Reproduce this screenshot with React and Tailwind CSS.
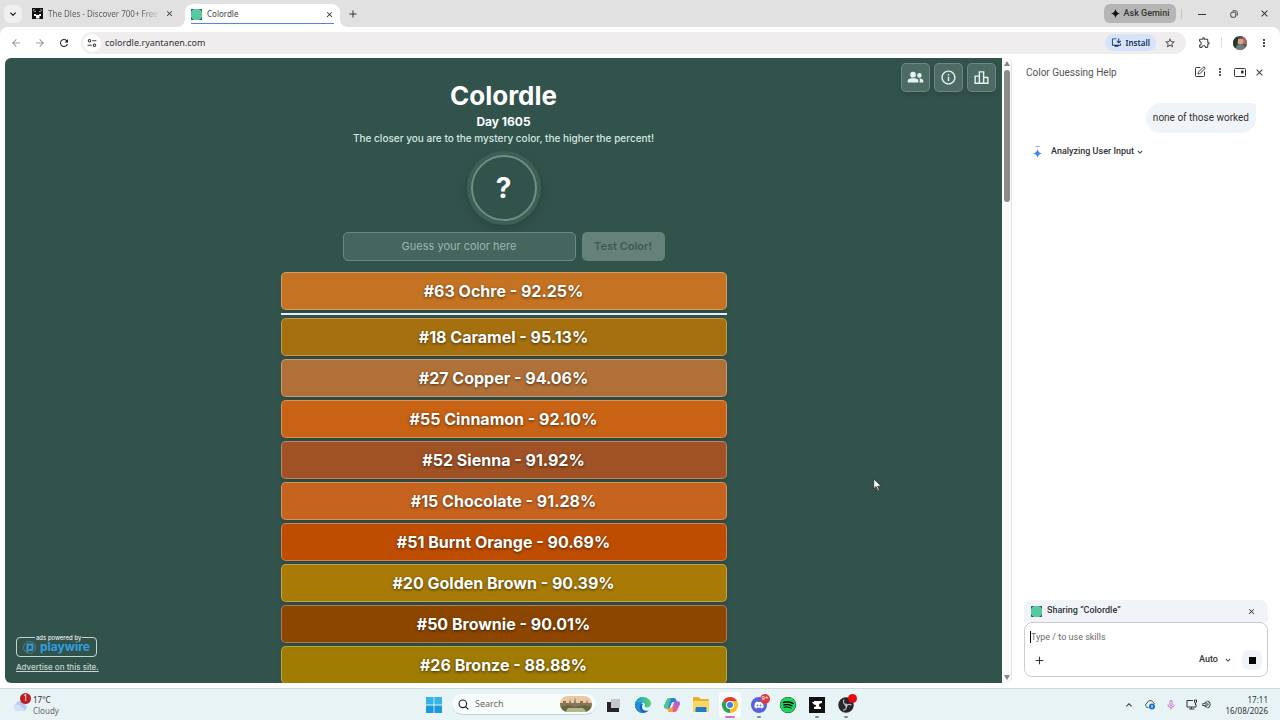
import React from 'react';
import {
  MdArrowBack,
  MdArrowForward,
  MdRefresh,
  MdClose,
  MdAdd,
  MdExpandMore,
  MdExpandLess,
  MdStarBorder,
  MdOutlineExtension,
  MdMoreVert,
  MdInfoOutline,
  MdOutlineLeaderboard,
  MdOutlineInstallDesktop,
  MdMicNone,
  MdOutlineVolumeUp,
} from 'react-icons/md';
import { FaDiscord, FaSpotify } from 'react-icons/fa';
import { LuSquarePen } from 'react-icons/lu';

const latestGuess = { id: 63, name: 'Ochre', percent: '92.25', color: 'bg-[#c47322]' };

const guesses = [
  { id: 18, name: 'Caramel', percent: '95.13', color: 'bg-[#a6700e]' },
  { id: 27, name: 'Copper', percent: '94.06', color: 'bg-[#b07038]' },
  { id: 55, name: 'Cinnamon', percent: '92.10', color: 'bg-[#c86214]' },
  { id: 52, name: 'Sienna', percent: '91.92', color: 'bg-[#a05224]' },
  { id: 15, name: 'Chocolate', percent: '91.28', color: 'bg-[#c6641f]' },
  { id: 51, name: 'Burnt Orange', percent: '90.69', color: 'bg-[#be4d02]' },
  { id: 20, name: 'Golden Brown', percent: '90.39', color: 'bg-[#a97b06]' },
  { id: 50, name: 'Brownie', percent: '90.01', color: 'bg-[#8d4600]' },
  { id: 26, name: 'Bronze', percent: '88.88', color: 'bg-[#a07b02]' },
];

/* Site icon: green tile with dark corners */
const ColordleIcon = () => (
  <svg viewBox="0 0 22 22" className="size-[11px] shrink-0">
    <rect width="22" height="22" rx="2" fill="#26352f" />
    <path d="M6 0h10l4 2 2 4v10l-2 4-4 2H6l-4-2-2-4V6l2-4z" fill="#55c9a1" />
  </svg>
);

const DlesIcon = () => (
  <svg viewBox="0 0 22 22" className="size-[11px] shrink-0">
    <rect width="22" height="22" fill="#111" />
    <path d="M1 5l3-3 2 1-3 3zM21 5l-3-3-2 1 3 3zM4 6h4v2H4zM14 6h4v2h-4z" fill="#999" />
    <path d="M4 12h3l2 2h4l2-2h3v4h-3v5H8v-5H4z" fill="#fff" />
  </svg>
);

const SparkIcon = ({ className }) => (
  <svg viewBox="0 0 16 16" className={className} fill="currentColor">
    <path d="M8 0c1 4.500 3.500 7 8 8-4.500 1-7 3.500-8 8-1-4.500-3.500-7-8-8 4.500-1 7-3.500 8-8z" />
  </svg>
);

const TuneIcon = () => (
  <svg viewBox="0 0 16 16" className="size-[10px]" fill="none" stroke="#3c3c3c" strokeWidth="1.700">
    <circle cx="4" cy="4.500" r="2" />
    <path d="M8.500 4.500H15M1 11.500h6.500" />
    <circle cx="12" cy="11.500" r="2" />
  </svg>
);

const TabFoot = ({ className }) => (
  <svg viewBox="0 0 8 8" className={className} fill="#fff">
    <path d="M8 0v8H0a8 8 0 0 0 8-8z" />
  </svg>
);

const TabStrip = () => (
  <div className="flex h-[27px] shrink-0 items-center bg-[#e1e1e1] pl-1">
    <button aria-label="Search tabs" className="flex size-[18px] items-center justify-center rounded-md bg-[#f0f0f0]">
      <MdExpandMore className="size-3" />
    </button>
    <div className="ml-[10px] flex w-[142px] items-center gap-[5px]">
      <DlesIcon />
      <span className="flex-1 bg-linear-to-r from-[#5a5a5a] from-85% to-transparent bg-clip-text text-[8px] whitespace-nowrap text-transparent">
        The Dles - Discover 700+ Free
      </span>
      <button aria-label="Close tab">
        <MdClose className="size-[9px] text-[#333]" />
      </button>
    </div>
    <div className="relative ml-[11px] flex h-[23px] w-[155px] items-center gap-[5px] self-end rounded-t-lg bg-white px-[6px] pb-[3px]">
      <TabFoot className="absolute -left-2 bottom-0 size-2" />
      <ColordleIcon />
      <span className="flex-1 text-[8px] text-[#444]">Colordle</span>
      <button aria-label="Close tab">
        <MdClose className="size-[9px] text-[#222]" />
      </button>
      <div className="absolute inset-x-[6px] bottom-[3px] h-px bg-[#4f86e0]"></div>
      <TabFoot className="absolute -right-2 bottom-0 size-2 -scale-x-100" />
    </div>
    <button aria-label="New tab" className="ml-[7px]">
      <MdAdd className="size-3 text-[#333]" />
    </button>

    {/* Window controls */}
    <div className="ml-auto flex items-center text-[#333]">
      <button className="flex h-[19px] w-[72px] items-center justify-center gap-1 rounded-md bg-[#b5b5b5] font-['Roboto',sans-serif] text-[9px] font-medium">
        <SparkIcon className="size-[9px] text-[#111]" />
        Ask Gemini
      </button>
      <div className="ml-[5px] h-[10px] w-px bg-[#c4c4c4]"></div>
      <button aria-label="Minimize" className="w-[36px] pl-4">
        <svg viewBox="0 0 8 8" className="size-2" stroke="currentColor">
          <path d="M0 4.500h8" />
        </svg>
      </button>
      <button aria-label="Restore" className="w-[31px]">
        <svg viewBox="0 0 16 16" className="mx-auto size-2" fill="none" stroke="currentColor" strokeWidth="1.800">
          <rect x="1.500" y="4.500" width="10" height="10" rx="2.500" />
          <path d="M5 1.500h6a3.500 3.500 0 0 1 3.500 3.500v6" />
        </svg>
      </button>
      <button aria-label="Close window" className="w-[31px]">
        <MdClose className="mx-auto size-[11px]" />
      </button>
    </div>
  </div>
);

const Toolbar = () => (
  <div className="shrink-0 bg-[#e1e1e1]">
    <div className="flex h-[31px] items-center rounded-t-lg bg-white px-[10px] text-[#444]">
      <div className="flex w-[71px] items-center gap-3">
        <button aria-label="Back"><MdArrowBack className="size-3 text-[#999]" /></button>
        <button aria-label="Forward"><MdArrowForward className="size-3 text-[#999]" /></button>
        <button aria-label="Reload"><MdRefresh className="size-3 text-[#222]" /></button>
      </div>
      <div className="flex h-[22px] flex-1 items-center rounded-full bg-[#efedee] pr-[10px] pl-[2px]">
        <button aria-label="Site information" className="flex size-[18px] items-center justify-center rounded-full bg-white">
          <TuneIcon />
        </button>
        <input
          aria-label="Address"
          defaultValue="colordle.ryantanen.com"
          className="ml-1 min-w-0 flex-1 bg-transparent text-[9px] text-[#333] outline-none"
        />
        <button className="flex h-[17px] items-center gap-1 rounded-full bg-[#d6e4fb] px-[6px] text-[8px] font-semibold text-[#14305c]">
          <MdOutlineInstallDesktop className="size-[11px]" />
          Install
        </button>
        <button aria-label="Bookmark" className="ml-2"><MdStarBorder className="size-3" /></button>
      </div>
      <button aria-label="Extensions" className="ml-3"><MdOutlineExtension className="size-[13px]" /></button>
      <div className="ml-[10px] h-[11px] w-px bg-[#ddd]"></div>
      <button aria-label="Profile" className="ml-[11px]">
        <svg viewBox="0 0 14 14" className="size-[14px] rounded-full">
          <rect width="14" height="14" fill="#3d4a3c" />
          <path d="M9 0h5v9l-4-1z" fill="#b2635c" />
          <circle cx="7.500" cy="5.500" r="3" fill="#d9a590" />
          <path d="M3 14c0-4 2-6 5-6s4 2 4 6z" fill="#6d7f7c" />
          <path d="M0 3l4-3 1 5-3 7H0z" fill="#26362b" />
        </svg>
      </button>
      <button aria-label="Menu" className="ml-[11px]"><MdMoreVert className="size-3 text-[#222]" /></button>
    </div>
  </div>
);

const Guess = ({ guess }) => (
  <li
    className={`flex h-[38px] shrink-0 items-center justify-center rounded-[5px] border border-white/30 text-[16px] font-bold text-white shadow-md text-shadow-[0_1px_3px_rgb(0_0_0/0.6)] ${guess.color}`}
  >
    #{guess.id} {guess.name} - {guess.percent}%
  </li>
);

const iconButton =
  'flex size-[29px] items-center justify-center rounded-[5px] border border-white/20 bg-[#4c6b64] text-[#e6f2ee] shadow-md';

const GamePage = () => (
  <main className="relative flex min-w-0 flex-1 flex-col items-center overflow-hidden rounded-l-md bg-[#32534c] pt-[21px] font-['Inter',sans-serif] text-white">
    <h1 className="text-[26px] leading-[34px] font-bold">Colordle</h1>
    <h2 className="text-[12px] leading-[18px] font-bold">Day 1605</h2>
    <p className="text-[10px] leading-[14px] font-medium text-[#d5e6e0]">
      The closer you are to the mystery color, the higher the percent!
    </p>
    <div className="mt-[10px] flex size-[66px] shrink-0 items-center justify-center rounded-full border-2 border-[#6d9085] text-[28px] font-bold shadow-[0_0_0_4px_#3d5f57,0_4px_14px_4px_rgb(0_0_0/0.18)]">
      ?
    </div>
    <form className="mt-[11px] flex h-[29px] shrink-0 gap-[6px]" onSubmit={(e) => e.preventDefault()}>
      <input
        aria-label="Guess your color here"
        placeholder="Guess your color here"
        className="w-[233px] rounded-[5px] border border-[#6b8a82] bg-[#45655f] text-center text-[11px] outline-none placeholder:text-[#9db5ae]"
      />
      <button className="w-[83px] rounded-[5px] bg-[#64827a] text-[11px] font-semibold text-[#3d5a53]">Test Color!</button>
    </form>

    {/* Guesses, best ones below the line */}
    <ul className="mt-[11px] w-[446px]">
      <Guess guess={latestGuess} />
    </ul>
    <hr className="my-[3px] w-[446px] border-t-2 border-[#e6f0f2]" />
    <ul className="flex w-[446px] flex-col gap-[3px]">
      {guesses.map((guess) => (
        <Guess key={guess.id} guess={guess} />
      ))}
    </ul>

    <div className="absolute top-[5px] right-[6px] flex gap-1">
      <button aria-label="Friends" className={iconButton}>
        <svg viewBox="0 0 24 24" className="size-[17px]" fill="currentColor">
          <circle cx="8.500" cy="8" r="4" />
          <path d="M1 19v-2.500C1 13.500 5 13 8.500 13s7.500.5 7.500 3.500V19z" />
          <circle cx="17.500" cy="9" r="3.200" />
          <path d="M17.500 19H23v-2.300c0-2.400-3-3.200-6-3.200 1.200.9 1.500 2 .5 5.500z" />
        </svg>
      </button>
      <button aria-label="How to play" className={iconButton}><MdInfoOutline className="size-[17px]" /></button>
      <button aria-label="Statistics" className={iconButton}><MdOutlineLeaderboard className="size-[17px]" /></button>
    </div>

    {/* Ad network badge */}
    <div className="absolute bottom-[10px] left-[11px] w-[81px]">
      <div className="relative flex h-5 items-center justify-center gap-1 rounded-sm border border-[#c4d5cf] text-[#2f9fe0]">
        <span className="absolute -top-1 left-[18px] bg-[#32534c] px-px text-[6px] leading-[7px] whitespace-nowrap text-white">ads powered by</span>
        <svg viewBox="0 0 26 26" className="size-[13px]" fill="none">
          <circle cx="13" cy="13" r="12" stroke="#5c7b77" strokeWidth="2" />
          <path d="M9 22V7h8a2 2 0 0 1 2 2v7a2 2 0 0 1-2 2h-5" stroke="currentColor" strokeWidth="4" />
        </svg>
        <span className="text-[12px] leading-3 font-bold">playwire</span>
      </div>
      <a href="#advertise" className="mt-1 block text-[8px] leading-3 font-medium whitespace-nowrap text-[#c4d5cf] underline">
        Advertise on this site.
      </a>
    </div>
  </main>
);

const Scrollbar = () => (
  <div className="flex w-[10px] shrink-0 flex-col items-center rounded-r-md border-r border-[#e3e3e3] bg-[#fafafa] py-[3px]">
    <svg viewBox="0 0 6 5" className="h-[5px] w-[6px]" fill="#858585"><path d="M3 0l3 5H0z" /></svg>
    <div className="mt-1 h-[132px] w-[6px] rounded-full bg-[#8b8b8b]"></div>
    <svg viewBox="0 0 6 5" className="mt-auto h-[5px] w-[6px]" fill="#858585"><path d="M3 5l3-5H0z" /></svg>
  </div>
);

const GeminiPanel = () => (
  <aside className="flex w-[268px] shrink-0 flex-col bg-white px-3 font-['Roboto',sans-serif] text-[#333]">
    <header className="flex h-[28px] shrink-0 items-center pr-[3px] pl-[2px]">
      <h2 className="flex-1 text-[10px] text-[#555]">Color Guessing Help</h2>
      <div className="flex items-center gap-2">
        <button aria-label="New chat"><LuSquarePen className="size-3" /></button>
        <button aria-label="More"><MdMoreVert className="size-3" /></button>
        <button aria-label="Dock panel">
          <svg viewBox="0 0 24 18" className="h-[9px] w-3" fill="none" stroke="currentColor" strokeWidth="2">
            <rect x="1" y="1" width="22" height="16" rx="2" />
            <rect x="15" y="6" width="3" height="4" fill="currentColor" />
          </svg>
        </button>
        <button aria-label="Close panel"><MdClose className="size-[11px]" /></button>
      </div>
    </header>
    <p className="mt-[17px] mr-3 self-end rounded-[15px] rounded-tr-sm bg-[#f0f4f8] px-[7px] text-[10px] leading-[30px]">
      none of those worked
    </p>
    <button className="mt-3 ml-[9px] flex h-[14px] items-center self-start text-[9px] font-medium">
      <svg viewBox="0 0 18 24" className="h-3 w-[9px]" fill="#4285f4">
        <path d="M9 6c1 5.500 3.500 8 9 9-5.500 1-8 3.500-9 9-1-5.500-3.500-8-9-9 5.500-1 8-3.500 9-9z" />
        <path d="M5 0h8v2H5z" opacity=".7" />
      </svg>
      <span className="ml-[9px]">Analyzing User Input</span>
      <MdExpandMore className="ml-px size-[10px]" />
    </button>

    <div className="mt-auto mb-[6px]">
      <div className="flex h-[22px] items-center gap-[5px] rounded-t-lg bg-[#f0f4f8] pr-3 pl-[7px] text-[9px] font-medium">
        <ColordleIcon />
        <span className="flex-1">Sharing “Colordle”</span>
        <button aria-label="Stop sharing"><MdClose className="size-[9px]" /></button>
      </div>
      <div className="flex h-[55px] flex-col justify-between rounded-lg border border-[#ccc] bg-white pt-2 pr-[5px] pb-[6px] pl-[5px]">
        <div className="flex items-center">
          <div className="h-3 w-px bg-black"></div>
          <input aria-label="Message" placeholder="Type / to use skills" className="min-w-0 flex-1 text-[9px] leading-3 outline-none placeholder:text-[#6b6b6b]" />
        </div>
        <div className="flex items-center">
          <button aria-label="Add"><MdAdd className="ml-[3px] size-[13px]" /></button>
          <select aria-label="Model" className="ml-auto appearance-none text-[9px] font-medium">
            <option>Auto</option>
          </select>
          <MdExpandMore className="ml-[5px] size-[10px]" />
          <button aria-label="Stop" className="ml-[9px] flex size-5 items-center justify-center rounded-md bg-[#f0f4f8]">
            <span className="size-[7px] bg-black"></span>
          </button>
        </div>
      </div>
    </div>
  </aside>
);

const TaskApp = ({ label, running, active, children }) => (
  <button
    aria-label={label}
    className={`relative flex h-[26px] w-[22px] items-center justify-center rounded-sm ${active ? 'bg-white/80' : ''}`}
  >
    {children}
    {running && <span className="absolute bottom-0 h-[2px] w-1 rounded-full bg-[#888]"></span>}
    {active && <span className="absolute bottom-0 h-[2px] w-[10px] rounded-full bg-[#d070c8]"></span>}
  </button>
);

const Taskbar = () => (
  <footer className="grid h-8 shrink-0 grid-cols-[1fr_auto_1fr] items-center border-t border-[#cbdcdd] bg-[#e8f3f5] text-[#333]">
    <button className="flex items-center gap-1 pl-3 text-left text-[8px]">
      <span className="relative">
        <svg viewBox="0 0 32 24" className="h-3 w-4">
          <path d="M8 23a7 7 0 0 1 0-13 9 9 0 0 1 17 0 7 7 0 0 1 0 13z" fill="#b7c9ef" />
          <path d="M6 23a6 6 0 0 1 1-11c6-3 11 1 12 5 6 0 7 6 3 6z" fill="#d5e0f8" />
        </svg>
        <span className="absolute -top-[6px] left-2 flex size-[11px] items-center justify-center rounded-full bg-[#bd1e24] text-[8px] text-white">1</span>
      </span>
      <span className="pl-px leading-[11px]">
        17°C
        <span className="block text-[#666]">Cloudy</span>
      </span>
    </button>

    {/* Pinned apps */}
    <div className="flex items-center gap-[7px]">
      <TaskApp label="Start">
        <svg viewBox="0 0 16 16" className="size-4" fill="#1c9bdc">
          <path d="M0 0h7.600v7.600H0zM8.400 0H16v7.600H8.400z" fill="#35b4e6" />
          <path d="M0 8.400h7.600V16H0zM8.400 8.400H16V16H8.400z" />
        </svg>
      </TaskApp>
      <label className="flex h-[21px] w-[144px] items-center gap-[6px] rounded-full border-b border-[#c5d3d5] bg-[#f9fcfd] pr-1 pl-[6px]">
        <svg viewBox="0 0 16 16" className="size-[11px]" fill="none" stroke="#222" strokeWidth="1.700">
          <circle cx="7" cy="7" r="5.500" />
          <path d="M11 11l4 4" />
        </svg>
        <input aria-label="Search" placeholder="Search" className="min-w-0 flex-1 text-[9px] outline-none placeholder:text-[#666]" />
        <svg viewBox="0 0 32 16" className="h-4 w-8">
          <clipPath id="skyline"><rect width="32" height="16" rx="8" /></clipPath>
          <g clipPath="url(#skyline)">
            <rect width="32" height="16" fill="#e8c9a4" />
            <path d="M0 7h3V5h3v2h3l1-4 1 4h3l1-6 1 6h4V5h3v2h3l1-3 1 3h4v5H0z" fill="#8c7358" />
            <path d="M0 11l8-2 7 2 9-2 8 2v5H0z" fill="#5c6b3d" />
            <path d="M8 12h15l4 4H5z" fill="#b7b58c" />
          </g>
        </svg>
      </label>
      <TaskApp label="Task view">
        <svg viewBox="0 0 14 14" className="size-[14px]">
          <path d="M4 1h9v9H4z" fill="#c4c8ca" />
          <path d="M0 4h4v6h8v4H0z" fill="#252525" />
        </svg>
      </TaskApp>
      <TaskApp label="Edge">
        <svg viewBox="0 0 32 32" className="size-4">
          <defs>
            <linearGradient id="edgeTop" x1="0" x2="1"><stop stopColor="#1c9ce0" /><stop offset="1" stopColor="#5ad26c" /></linearGradient>
          </defs>
          <path d="M16 0a16 16 0 1 0 12 26.500c-3 1.500-8 1.500-11-.5-4-3-4-8-1-11L2 8z" fill="#1466b8" />
          <path d="M0 15C1 6 8 0 16 0c9 0 16 6 16 13 0 5-4 8-8 8-4 0-5.500-1.500-4.500-3.500C21 14 17 10 12 10 6 10 2 12 0 15z" fill="url(#edgeTop)" />
          <path d="M0 16c2-4 6-6 11-6 3 0 5 1 6 2-6 1-9 7-7 12 1 4 4 7 8 8A16 16 0 0 1 0 16z" fill="#1f8fdd" />
        </svg>
      </TaskApp>
      <TaskApp label="Copilot">
        <svg viewBox="0 0 32 32" className="size-4">
          <path d="M11 2h9c3 0 4 2 5 5l1 3h-7c-3 0-4 2-5 5l-3 8H4c-4 0-4-4-3-7l4-9c1-3 3-5 6-5z" fill="#2683d8" />
          <path d="M5 7c1-3 3-5 6-5h3l-5 17c-1 3-2 4-4 4-5 0-5-4-4-7z" fill="#4dc58b" />
          <path d="M21 30h-9c-3 0-4-2-5-5l-1-3h7c3 0 4-2 5-5l3-8h7c4 0 4 4 3 7l-4 9c-1 3-3 5-6 5z" fill="#e95c93" />
          <path d="M12 30c-3 0-4-2-5-5l-1-3h7c2 0 3-1 4-3l1 11z" fill="#f6a340" />
          <path d="M21 9h7c4 0 4 4 3 7l-1 2-11-2z" fill="#a466df" />
        </svg>
      </TaskApp>
      <TaskApp label="File Explorer">
        <svg viewBox="0 0 32 30" className="h-[15px] w-4">
          <path d="M0 3c0-2 1-3 3-3h8l4 4h14c2 0 3 1 3 3v20c0 2-1 3-3 3H3c-2 0-3-1-3-3z" fill="#e9ae2e" />
          <path d="M0 8h32v19c0 2-1 3-3 3H3c-2 0-3-1-3-3z" fill="#fbd462" />
          <path d="M5 30v-7c0-2 1-3 3-3h16c2 0 3 1 3 3v7z" fill="#1f7ad1" />
        </svg>
      </TaskApp>
      <TaskApp label="Chrome" active>
        <svg viewBox="0 0 32 32" className="size-4">
          <path d="M16 16L2.140 8A16 16 0 0 1 29.860 8z" fill="#e33b2e" />
          <path d="M16 16L29.860 8A16 16 0 0 1 16 32z" fill="#fbc116" />
          <path d="M16 16v16A16 16 0 0 1 2.140 8z" fill="#2ba24c" />
          <path d="M16 8h13.860L23 20z" fill="#fbc116" />
          <path d="M2.140 8L9 20l7-4z" fill="#2ba24c" />
          <circle cx="16" cy="16" r="8" fill="#fff" />
          <circle cx="16" cy="16" r="6" fill="#3b7ded" />
        </svg>
      </TaskApp>
      <TaskApp label="Discord" running>
        <span className="flex size-4 items-center justify-center rounded-full bg-[#5562e0]"><FaDiscord className="size-[10px] text-white" /></span>
        <span className="absolute top-[2px] right-0 flex size-[10px] items-center justify-center rounded-full bg-[#d83c48] text-[6px] text-white">9+</span>
      </TaskApp>
      <TaskApp label="Spotify">
        <span className="rounded-full bg-black"><FaSpotify className="size-4 text-[#1fd760]" /></span>
      </TaskApp>
      <TaskApp label="Anvil" running>
        <svg viewBox="0 0 16 16" className="size-4">
          <rect width="16" height="16" fill="#111" />
          <path d="M3 5h2V4h8v2c-2 0-3 1-3 2s0 2 2 2v2H5v-2c2 0 2-1 2-2-2 0-3-1-4-3z" fill="#fff" />
        </svg>
      </TaskApp>
      <TaskApp label="OBS Studio" running>
        <svg viewBox="0 0 32 32" className="size-4" fill="none" stroke="#b9bcc0" strokeWidth="2.500">
          <circle cx="16" cy="16" r="15.500" fill="#24262a" stroke="none" />
          <path d="M12 5c-3 5 0 10 5 10M27 16c-5-3-10-1-10 4M10 26c6 0 8-5 6-10" />
          <circle cx="16" cy="16" r="3" fill="#b9bcc0" stroke="none" />
        </svg>
        <span className="absolute top-[2px] right-0 size-[9px] rounded-full bg-[#e50914]"></span>
      </TaskApp>
    </div>

    {/* System tray */}
    <div className="flex items-center justify-end pr-3">
      <button aria-label="Hidden icons"><MdExpandLess className="size-3" /></button>
      <button aria-label="OneDrive" className="ml-[9px]">
        <svg viewBox="0 0 24 20" className="h-[10px] w-3" fill="none">
          <path d="M9 15H6a5 5 0 0 1 0-9 7 7 0 0 1 13-1l2 3" stroke="#555" strokeWidth="2" />
          <circle cx="16" cy="13" r="6" fill="#1473c8" />
          <path d="M16 10v6" stroke="#fff" strokeWidth="2" />
        </svg>
      </button>
      <button aria-label="Microphone" className="ml-[9px]"><MdMicNone className="size-3 text-[#c271c4]" /></button>
      <button aria-label="Network and volume" className="ml-[9px] flex items-center gap-[3px]">
        <svg viewBox="0 0 24 22" className="h-[11px] w-3" fill="none" stroke="#333" strokeWidth="2">
          <path d="M14 3H2v13h18v-5M6 20h11M11 16v4M17 2v4a2 2 0 0 0 4 0V2zM19 8v4" />
        </svg>
        <MdOutlineVolumeUp className="size-[11px]" />
      </button>
      <time className="ml-[13px] text-right text-[8px] leading-[11px]">
        17:11
        <span className="block">16/08/2026</span>
      </time>
    </div>
  </footer>
);

const App = () => {
  return (
    <div className="relative flex h-screen flex-col overflow-hidden bg-white font-['Noto_Sans','Open_Sans',sans-serif]">
      <TabStrip />
      <Toolbar />
      <div className="flex min-h-0 flex-1 pb-[5px] pl-[5px]">
        <GamePage />
        <Scrollbar />
        <GeminiPanel />
      </div>
      <Taskbar />

      {/* Mouse pointer */}
      <svg viewBox="0 0 12 18" className="pointer-events-none absolute top-[478px] left-[873px] h-[14px] w-[9px]" fill="#fff" stroke="#222">
        <path d="M1 1v13l3-3 2.500 5.500 2-1L6.200 10.500H11z" />
      </svg>
    </div>
  );
};

export default App;
